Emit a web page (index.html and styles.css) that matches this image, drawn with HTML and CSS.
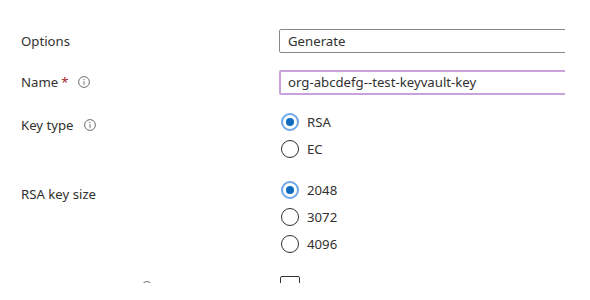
FILE: index.html
```html
<!DOCTYPE html>
<html lang="en">
<head>
  <meta charset="UTF-8">
  <meta name="viewport" content="width=device-width, initial-scale=1.0">
  <title>Create a key</title>
  <link rel="stylesheet" href="styles.css">
</head>
<body>
  <div class="viewport">
    <form class="key-form">
      <div class="row row-options">
        <label class="field-label">Options</label>
        <div class="control">
          <div class="select">Generate</div>
        </div>
      </div>

      <div class="row row-name">
        <label class="field-label">
          Name <span class="required">*</span>
          <svg class="info" viewBox="0 0 12 12" width="12" height="12">
            <circle cx="6" cy="6" r="5.4" fill="none" stroke="#605e5c" stroke-width="0.9"/>
            <line x1="6" y1="5.2" x2="6" y2="8.8" stroke="#605e5c" stroke-width="0.9"/>
            <circle cx="6" cy="3.6" r="0.6" fill="#605e5c"/>
          </svg>
        </label>
        <div class="control">
          <div class="textbox">org-abcdefg--test-keyvault-key</div>
        </div>
      </div>

      <div class="row row-keytype">
        <label class="field-label">
          Key type
          <svg class="info" viewBox="0 0 12 12" width="12" height="12">
            <circle cx="6" cy="6" r="5.4" fill="none" stroke="#605e5c" stroke-width="0.9"/>
            <line x1="6" y1="5.2" x2="6" y2="8.8" stroke="#605e5c" stroke-width="0.9"/>
            <circle cx="6" cy="3.6" r="0.6" fill="#605e5c"/>
          </svg>
        </label>
        <div class="control radio-group">
          <div class="radio checked"><span class="dot"></span>RSA</div>
          <div class="radio"><span class="dot"></span>EC</div>
        </div>
      </div>

      <div class="row row-size">
        <label class="field-label">RSA key size</label>
        <div class="control radio-group">
          <div class="radio checked"><span class="dot"></span>2048</div>
          <div class="radio"><span class="dot"></span>3072</div>
          <div class="radio"><span class="dot"></span>4096</div>
        </div>
      </div>

      <!-- next row is cut off by the screenshot, only the info icon and checkbox tops show -->
      <div class="row row-activation">
        <div class="field-label partial">
          <svg class="info" viewBox="0 0 12 12" width="12" height="12">
            <circle cx="6" cy="6" r="5.4" fill="none" stroke="#605e5c" stroke-width="0.9"/>
            <line x1="6" y1="5.2" x2="6" y2="8.8" stroke="#605e5c" stroke-width="0.9"/>
            <circle cx="6" cy="3.6" r="0.6" fill="#605e5c"/>
          </svg>
        </div>
        <div class="control">
          <span class="checkbox"></span>
        </div>
      </div>
    </form>
  </div>
</body>
</html>
```

FILE: styles.css
```css
body {
  margin: 0;
  padding: 0;
  background: #fff;
  font-family: "Noto Sans", "Open Sans", sans-serif;
  font-size: 13.2px;
  color: #323130;
}

.viewport {
  width: 565px;
  height: 283px;
  overflow: hidden;
}

.key-form {
  padding: 29px 0 0 21px;
}

.row {
  display: grid;
  grid-template-columns: 258px 320px;
}

.field-label {
  display: flex;
  align-items: center;
  gap: 4px;
  height: 24px;
  white-space: nowrap;
}

.required {
  color: #a4262c;
  margin-left: -1px;
}

.info {
  margin-left: 6px;
  flex-shrink: 0;
}

.select,
.textbox {
  box-sizing: border-box;
  height: 24px;
  padding: 0 8px;
  line-height: 22px;
  border: 1px solid #8a8886;
  border-radius: 2px;
  white-space: nowrap;
}

.row-name {
  margin-top: 17px;
}

.row-name .textbox {
  height: 25px;
  line-height: 21px;
  border: 2px solid #c9a2dc;
  padding-left: 7px;
}

.row-keytype {
  margin-top: 13px;
}

.row-keytype .field-label,
.row-size .field-label {
  height: 20px;
  padding-top: 7px;
}

.row-size {
  margin-top: 14px;
}

.row-size .field-label {
  padding-top: 8px;
}

.radio-group {
  display: flex;
  flex-direction: column;
}

.radio {
  display: flex;
  align-items: center;
  height: 27px;
  margin-left: 2px;
}

.radio .dot {
  box-sizing: border-box;
  width: 18px;
  height: 18px;
  margin-right: 8px;
  border: 1px solid #323130;
  border-radius: 50%;
  position: relative;
}

.radio.checked .dot {
  border: 2px solid #6ea8e8;
}

.radio.checked .dot::after {
  content: "";
  position: absolute;
  top: 3px;
  left: 3px;
  width: 8px;
  height: 8px;
  border-radius: 50%;
  background: #0f6cbd;
}

.row-activation {
  margin-top: 19px;
}

.field-label.partial {
  align-items: flex-start;
  padding-left: 114px;
  padding-top: 5px;
}

.checkbox {
  display: block;
  box-sizing: border-box;
  width: 20px;
  height: 20px;
  margin-left: 1px;
  border: 1px solid #323130;
  border-radius: 2px;
}
```
